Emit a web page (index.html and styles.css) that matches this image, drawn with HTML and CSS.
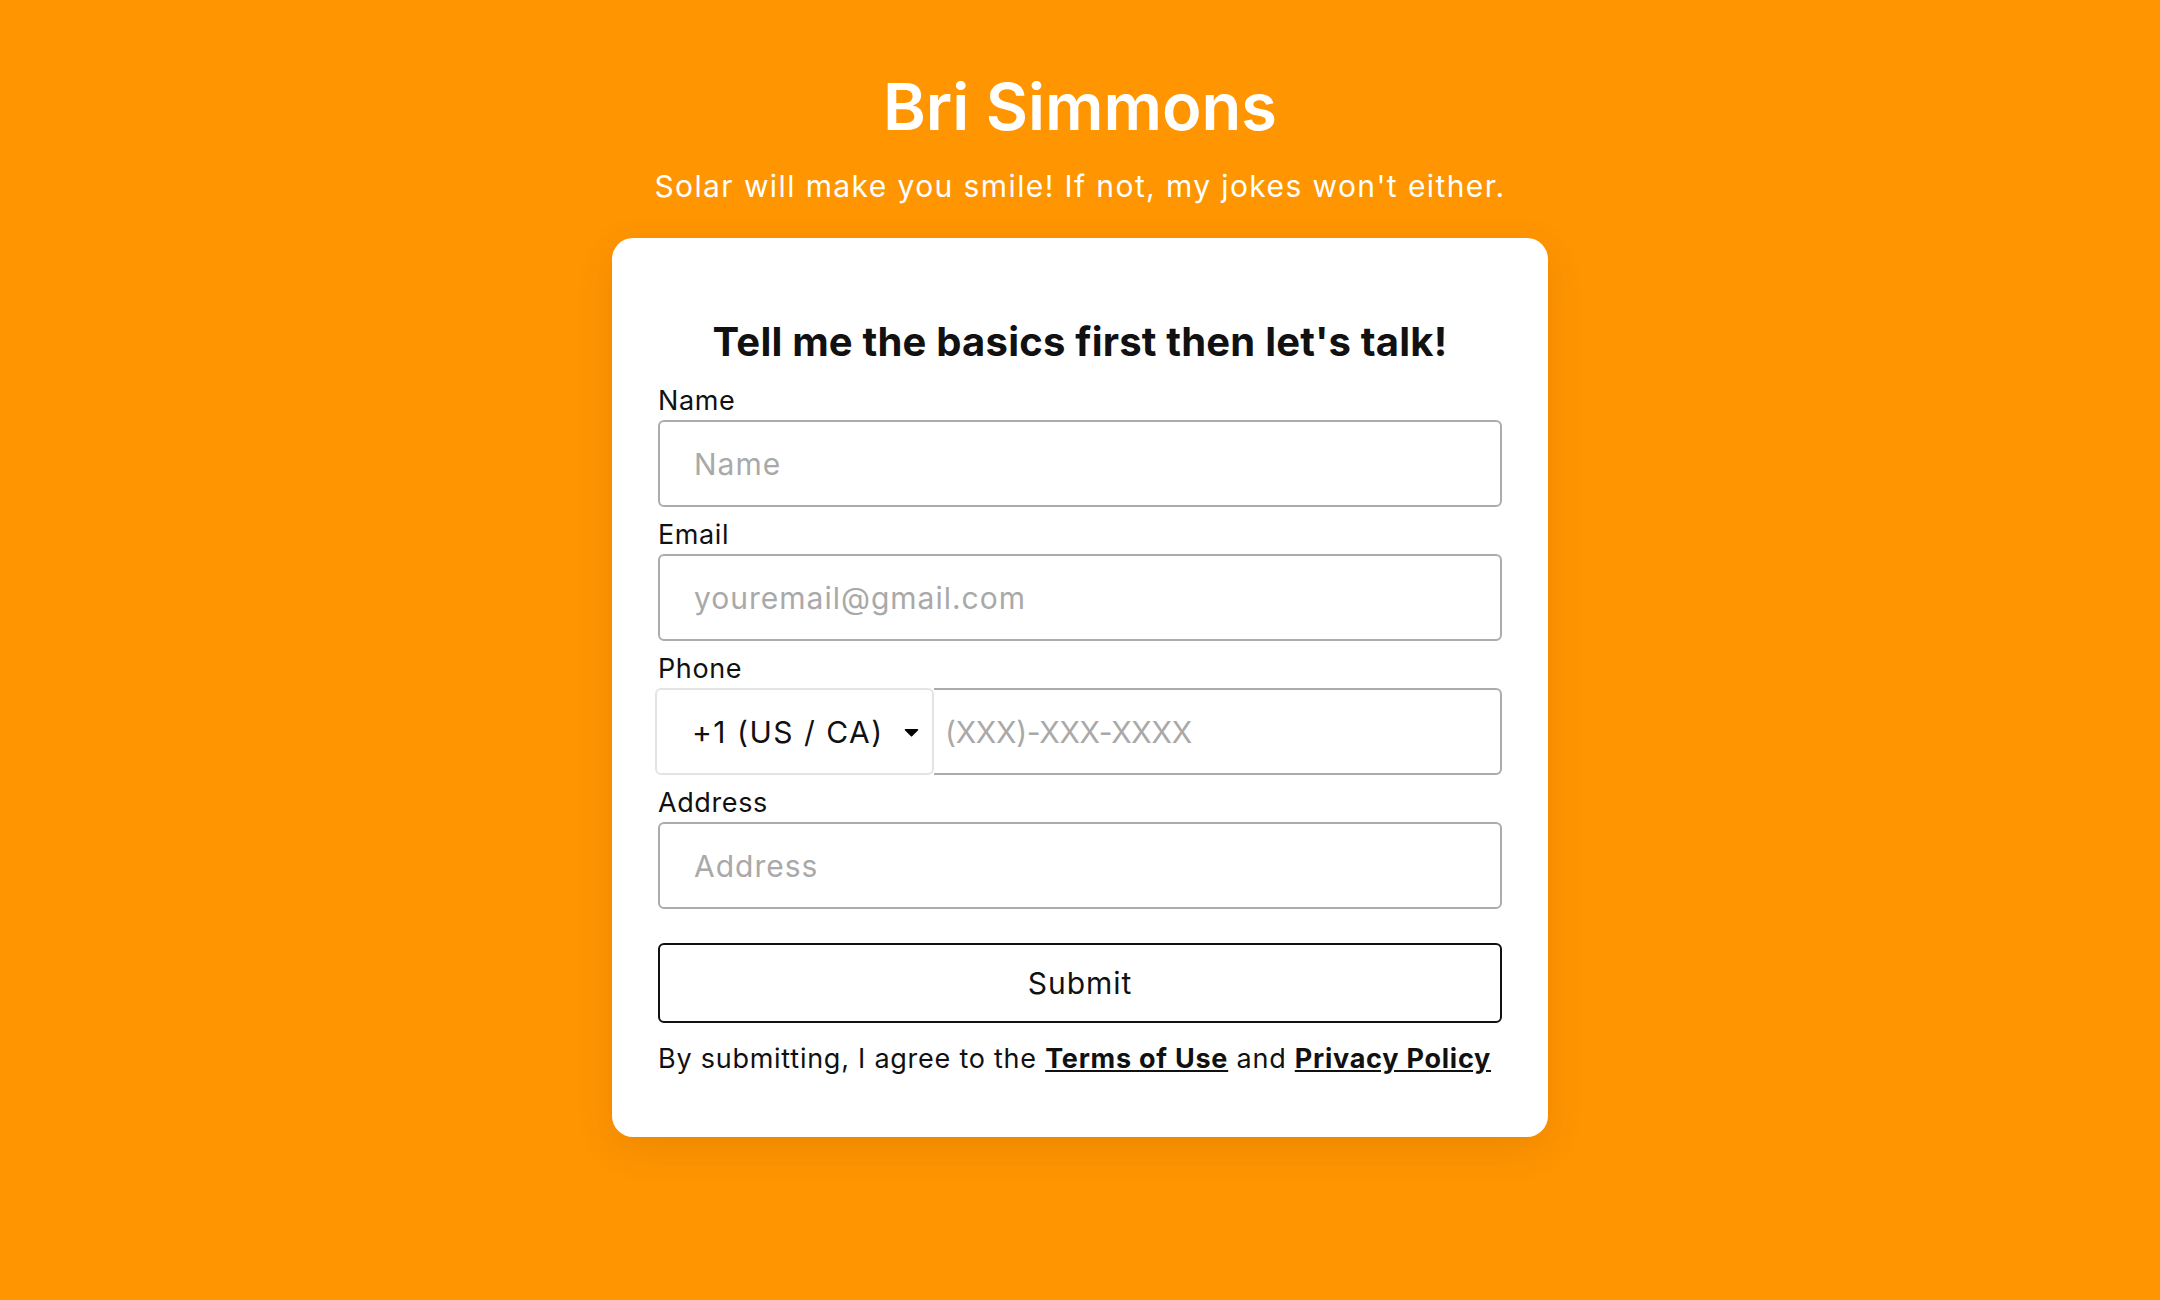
FILE: index.html
```html
<!DOCTYPE html>
<html lang="en">
<head>
  <meta charset="UTF-8">
  <title>Bri Simmons - Solar</title>
  <link rel="stylesheet" href="styles.css">
</head>
<body>

  <div class="page">
    <h1>Bri Simmons</h1>
    <p class="tagline">Solar will make you smile! If not, my jokes won't either.</p>

    <form class="card" onsubmit="return false">
      <h2>Tell me the basics first then let's talk!</h2>

      <div class="field">
        <label for="name">Name</label>
        <input id="name" type="text" placeholder="Name">
      </div>

      <div class="field">
        <label for="email">Email</label>
        <input id="email" type="email" placeholder="youremail@gmail.com">
      </div>

      <div class="field">
        <label for="phone">Phone</label>
        <div class="phone-row">
          <div class="country">
            <select id="country">
              <option>+1 (US / CA)</option>
              <option>+44 (UK)</option>
              <option>+61 (AU)</option>
            </select>
            <svg class="caret" width="15" height="9" viewBox="0 0 15 9">
              <path d="M1.5 1h12a.8.8 0 0 1 .6 1.3L8.1 8.2a.8.8 0 0 1-1.2 0L.9 2.3A.8.8 0 0 1 1.5 1z" fill="#000"/>
            </svg>
          </div>
          <input id="phone" class="tel" type="tel" placeholder="(XXX)-XXX-XXXX">
        </div>
      </div>

      <div class="field">
        <label for="address">Address</label>
        <input id="address" type="text" placeholder="Address">
      </div>

      <button class="submit" type="submit">Submit</button>

      <p class="terms">By submitting, I agree to the <a href="#">Terms of Use</a> and <a href="#">Privacy Policy</a></p>
    </form>
  </div>

</body>
</html>
```

FILE: styles.css
```css
body {
  margin: 0;
  background: #ff9500;
  font-family: Inter, "Noto Sans", sans-serif;
  color: #111;
}

.page {
  display: flex;
  flex-direction: column;
  align-items: center;
  padding: 67px 0 80px;
}

h1 {
  margin: 0;
  font-size: 65px;
  font-weight: 600;
  color: #fff;
}

.tagline {
  margin: 22px 0 34px;
  font-size: 30px;
  color: #fff;
  letter-spacing: 1.4px;
}

.card {
  box-sizing: border-box;
  width: 936px;
  padding: 79px 46px 62px;
  background: #fff;
  border-radius: 21px;
  box-shadow: 0 12px 36px rgba(120, 60, 0, 0.14);
}

h2 {
  margin: 0 0 18px;
  font-size: 40px;
  font-weight: 700;
  letter-spacing: 0.2px;
  text-align: center;
}

.field {
  margin-bottom: 11px;
}

.field label {
  display: block;
  font-size: 27px;
  line-height: 33px;
  letter-spacing: 0.6px;
  margin-bottom: 3px;
}

input {
  box-sizing: border-box;
  width: 100%;
  height: 87px;
  padding: 0 34px;
  border: 2px solid #acacac;
  border-radius: 6px;
  font-family: inherit;
  font-size: 30px;
  letter-spacing: 1px;
  color: #111;
  outline: none;
}

input::placeholder {
  color: #a9a9a9;
}

.phone-row {
  display: flex;
  margin-left: -3px;
}

.country {
  position: relative;
  flex: 0 0 279px;
}

.country select {
  box-sizing: border-box;
  width: 100%;
  height: 87px;
  padding: 0 0 0 35px;
  border: 2px solid #e4e4e4;
  border-radius: 6px;
  background: #fff;
  font-family: inherit;
  font-size: 30px;
  letter-spacing: 1.5px;
  color: #111;
  appearance: none;
  -webkit-appearance: none;
  outline: none;
}

.country .caret {
  position: absolute;
  right: 15px;
  top: 40px;
  pointer-events: none;
}

.phone-row .tel {
  flex: 1;
  padding-left: 11px;
  letter-spacing: -0.3px;
  border-left: 0;
  border-radius: 0 6px 6px 0;
}

.submit {
  display: block;
  width: 100%;
  height: 80px;
  margin-top: 34px;
  background: #fff;
  border: 2px solid #111;
  border-radius: 6px;
  font-family: inherit;
  font-size: 30px;
  letter-spacing: 1px;
  color: #111;
  cursor: pointer;
}

.terms {
  margin: 19px 0 0;
  font-size: 27px;
  line-height: 33px;
  letter-spacing: 0.75px;
}

.terms a {
  color: #111;
  font-weight: 700;
  text-decoration: underline;
}
```
